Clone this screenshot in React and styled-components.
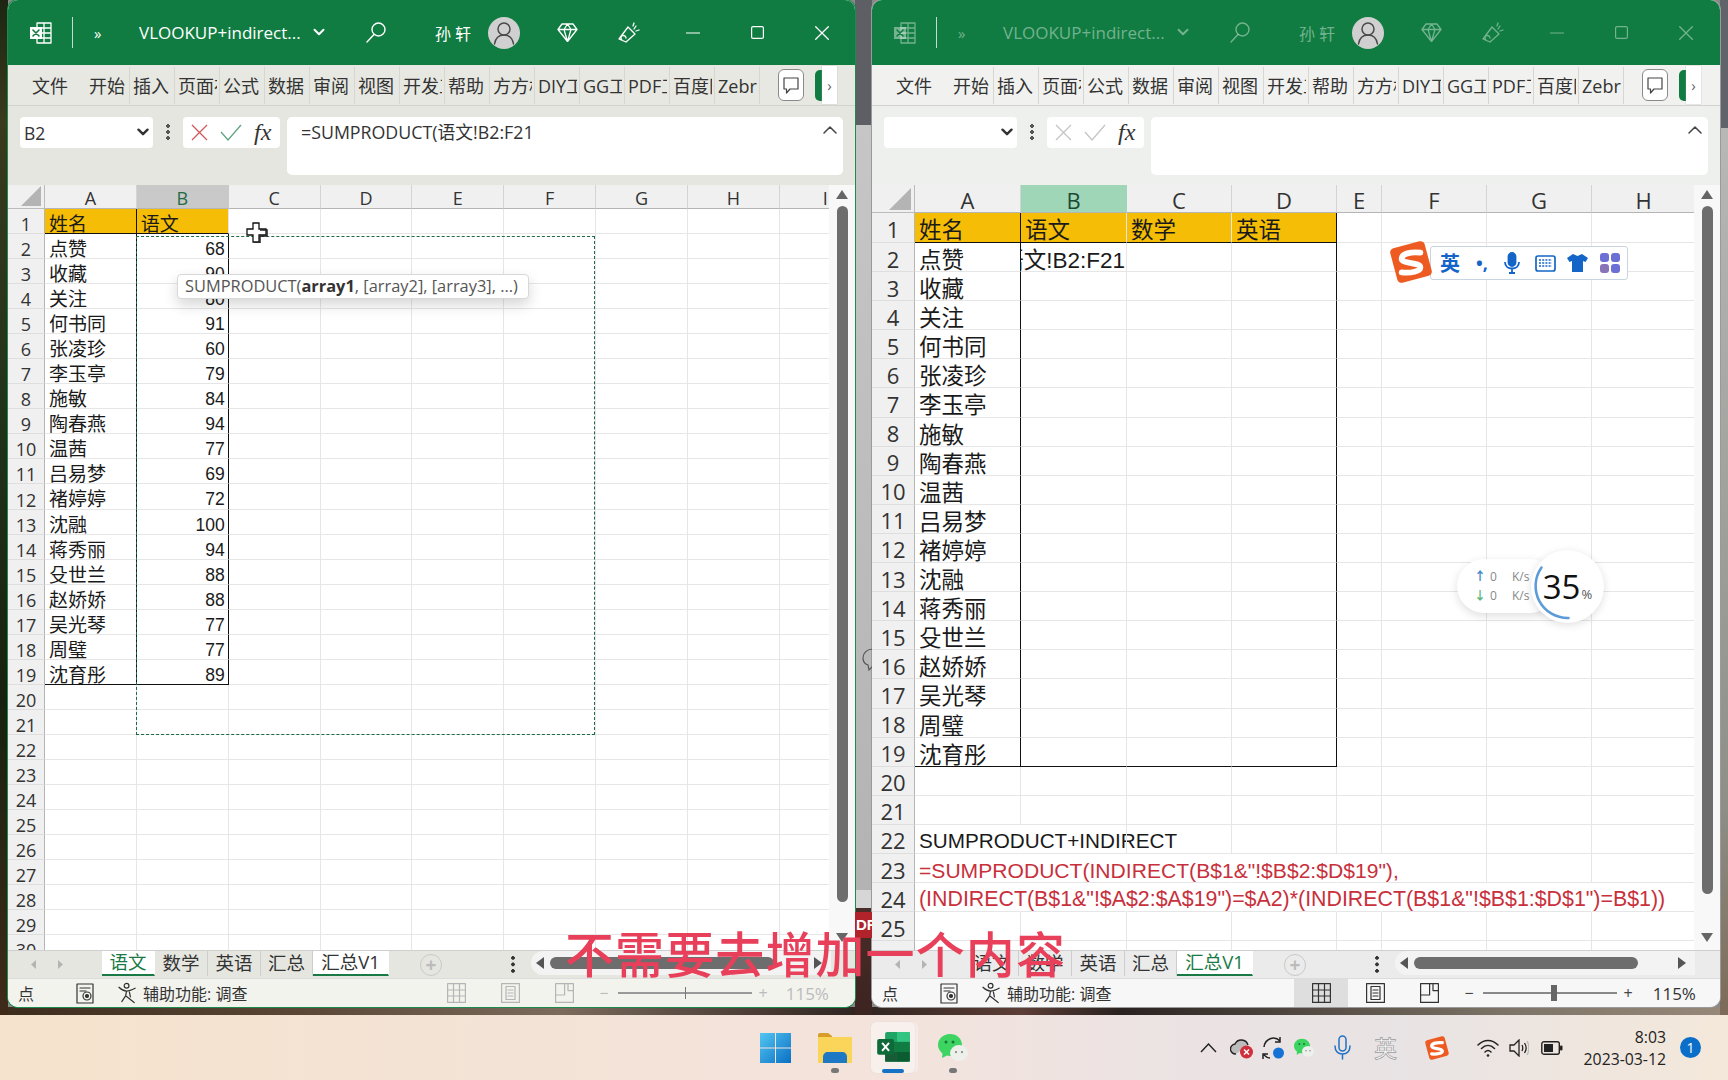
import React from "react";
import styled, { createGlobalStyle } from "styled-components";

const UI = `"Open Sans","Noto Sans CJK SC",sans-serif`;
const CELL = `"Liberation Sans","Noto Sans CJK SC",sans-serif`;

const Global = createGlobalStyle`
  html,body{margin:0;padding:0;background:#222;overflow:hidden;}
  *{box-sizing:border-box;}
`;

const Desktop = styled.div`
  position:relative;width:1728px;height:1080px;overflow:hidden;display:flex;flex-direction:column;font-family:${UI};
  background:
    linear-gradient(180deg,#5d5f64 0 125px,#c6c6c6 125px,#b3b3b3 890px,#d6d6d6 890px,#d6d6d6 908px,#4a2c28 908px,#3c2420 1015px) 855px 0/17px 1015px no-repeat,
    linear-gradient(180deg,#60636a 0 128px,#b8b8b6 128px,#8f8f88 800px,#7d6a58 1015px) 1720px 0/8px 1015px no-repeat,
    linear-gradient(180deg,#1c2612 0,#3a3a1c 120px,#22331a 400px,#18210f 700px,#3f2a18 1015px) 0 0/8px 1015px no-repeat,
    linear-gradient(90deg,#3c2c1c,#5a4736 300px,#7a6b5c 560px,#2f2420 860px,#5c3e36 1020px,#2a2220 1120px,#7c7366 1500px,#97897a 1728px) 0 1007px/1728px 8px no-repeat,
    #888;
`;
const WindowRow = styled.div`display:flex;height:1015px;padding:0 8px 8px 8px;gap:17px;`;
const Win = styled.section`
  width:${p=>p.$w}px;height:1007px;display:flex;flex-direction:column;border-radius:10px;overflow:hidden;background:#fff;
  box-shadow:0 0 0 1px ${p=>p.$active?"#1d8a50":"#9a9a9a"};
`;
const TitleBar = styled.header`
  height:65px;flex:none;display:flex;align-items:center;background:#107c41;color:${p=>p.$dim?"rgba(255,255,255,.42)":"#fff"};
`;
const TitleGlyph = styled.span`display:inline-flex;align-items:center;justify-content:center;flex:none;margin-left:${p=>p.$ml}px;width:${p=>p.$w}px;`;
const TitleDivider = styled.span`flex:none;margin-left:20px;width:1px;height:31px;background:rgba(255,255,255,.75);`;
const TitleText = styled.span`flex:none;margin-left:${p=>p.$ml}px;width:${p=>p.$w}px;font-size:${p=>p.$fs}px;white-space:nowrap;letter-spacing:${p=>p.$ls||0}px;`;
const Avatar = styled.span`flex:none;margin-left:14px;width:32px;height:32px;border-radius:50%;background:#d0d0d0;display:flex;align-items:center;justify-content:center;color:#4a4a4a;`;

const Ribbon = styled.nav`
  height:41px;flex:none;display:flex;align-items:center;background:${p=>p.$tint};border-bottom:1px solid #d2d3cd;color:#333;font-size:18px;
`;
const RibbonTab = styled.span`
  flex:none;height:37px;line-height:37px;padding-top:1px;white-space:nowrap;
  margin-left:${p=>p.$ml||0}px;width:${p=>p.$w||45}px;padding-left:${p=>p.$pl??3}px;
  border-right:1px solid ${p=>p.$noSep?"transparent":"#d6d6d2"};
`;
const RibbonClip = styled.span`display:block;width:39px;overflow:hidden;white-space:nowrap;`;
const CommentBtn = styled.span`flex:none;margin-left:18px;width:26px;height:32px;border:1px solid #8a8a8a;border-radius:6px;background:#fff;display:flex;align-items:center;justify-content:center;color:#444;`;
const ShareStub = styled.span`flex:none;margin-left:11px;width:7px;height:31px;background:#107c41;border-radius:5px 0 0 5px;`;
const RibbonMore = styled.span`flex:none;width:15px;height:38px;background:#fff;color:#666;font-size:15px;display:flex;align-items:center;justify-content:center;box-shadow:0 0 1px #aaa;`;

const FormulaBar = styled.div`height:79px;flex:none;display:flex;align-items:flex-start;padding:11px 0 0 12px;background:${p=>p.$tint};`;
const NameBox = styled.div`width:133px;height:31px;flex:none;background:#fff;border-radius:4px;display:flex;align-items:center;padding:0 4px 0 4px;font-size:17.500px;color:#333;`;
const NameChevron = styled.span`display:flex;margin-left:auto;`;
const Dots = styled.span`flex:none;margin:7px 13px 0;width:4px;height:16px;background:radial-gradient(circle at 2px 2px,#555 1.6px,transparent 2px) 0 0/4px 6px repeat-y;`;
const FxBox = styled.div`width:97px;height:31px;flex:none;background:#fff;border-radius:4px;display:flex;align-items:center;padding-left:8px;gap:12px;`;
const FxLabel = styled.span`font:italic 24px "Liberation Serif",serif;color:#333;`;
const FormulaInput = styled.div`position:relative;margin-left:7px;flex:none;width:${p=>p.$w}px;height:58px;background:#fff;border-radius:5px;padding:1px 0 0 14px;font-size:17.800px;line-height:29px;color:#333;white-space:nowrap;`;
const Collapse = styled.span`position:absolute;right:6px;top:9px;color:#444;display:flex;`;

const SheetArea = styled.div`flex:1;min-height:0;display:flex;background:#fff;`;
const GridWrap = styled.div`position:relative;flex:1;min-width:0;overflow:hidden;`;
const Grid = styled.div`
  display:grid;grid-template-columns:${p=>p.$cols};grid-template-rows:${p=>p.$head}px ${p=>p.$first}px;grid-auto-rows:${p=>p.$row}px;
  font-family:${CELL};color:#1a1a1a;
`;
const Corner = styled.div`background:#f0f0f0;border-right:1px solid #bbb;border-bottom:1px solid #bbb;position:relative;
  &::after{content:"";position:absolute;right:3px;bottom:2px;width:0;height:0;border-left:${p=>p.$s}px solid transparent;border-bottom:${p=>p.$s}px solid #b4b4b4;}
`;
const ColHead = styled.div`
  background:${p=>p.$sel||"#f0f0f0"};color:${p=>p.$selText||"#333"};border-right:1px solid ${p=>p.$sel?"transparent":"#d4d4d4"};border-bottom:1px solid #b5b5b5;
  display:flex;align-items:center;justify-content:center;padding-top:3px;font-size:${p=>p.$fs}px;font-family:${UI};
`;
const RowHead = styled.div`background:#f0f0f0;color:#333;border-right:1px solid #b5b5b5;border-bottom:1px solid #dedede;display:flex;align-items:center;justify-content:center;padding-top:${p=>p.$pt}px;font-size:${p=>p.$fs}px;font-family:${UI};`;
const Cell = styled.div`
  min-width:0;white-space:nowrap;display:flex;align-items:flex-start;line-height:1;padding:${p=>p.$pt}px ${p=>p.$clip?1:3}px 0 ${p=>p.$right?3:4}px;font-size:${p=>p.$fs}px;
  justify-content:${p=>p.$right?"flex-end":"flex-start"};
  background:${p=>p.$fill||"transparent"};color:${p=>p.$color||"#1a1a1a"};
  border-right:${p=>p.$br?"1px solid #111":p.$nor?"1px solid transparent":"1px solid #e6e6e6"};
  border-bottom:${p=>p.$bb?"1px solid #111":"1px solid #e6e6e6"};
  overflow:${p=>p.$clip?"hidden":"visible"};
`;
const CellText = styled.span`flex:none;`;

const Scroller = styled.div`flex:none;width:26px;background:#f8f8f8;position:relative;display:flex;flex-direction:column;align-items:center;`;
const ScrollUp = styled.span`margin-top:5px;width:0;height:0;border-left:6px solid transparent;border-right:6px solid transparent;border-bottom:9px solid #666;`;
const ScrollThumb = styled.span`margin-top:7px;width:11px;height:${p=>p.$h}px;border-radius:6px;background:#6d6d6d;`;
const ScrollDown = styled.span`position:absolute;bottom:8px;width:0;height:0;border-left:6px solid transparent;border-right:6px solid transparent;border-top:9px solid #666;`;

const TabBar = styled.div`height:28px;flex:none;display:flex;align-items:flex-start;background:${p=>p.$tint};border-top:1px solid #cfcfcf;font-size:18.500px;color:#333;`;
const TabArrow = styled.span`flex:none;margin:8px 0 0 ${p=>p.$ml}px;color:#b4b4b4;display:flex;`;
const TabGap = styled.span`flex:none;width:38px;`;
const SheetTab = styled.span`
  flex:none;width:${p=>p.$w}px;height:25px;display:flex;align-items:center;justify-content:center;padding-bottom:3px;
  background:${p=>p.$state?"#fff":"transparent"};color:${p=>p.$state==="active"?"#1a7a45":"#333"};
  border-bottom:${p=>p.$state?"2px solid #1a7a45":"none"};border-right:1px solid ${p=>p.$state?"transparent":"#cdcdcd"};
`;
const AddTab = styled.span`flex:none;margin:3px 0 0 ${p=>p.$ml}px;width:22px;height:22px;border-radius:50%;border:1px solid #c9c9c9;color:#bbb;display:flex;align-items:center;justify-content:center;font-size:19px;line-height:1;font-weight:700;`;
const VDots = styled(Dots)`margin:5px 0 0 69px;height:18px;background:radial-gradient(circle at 2px 2px,#333 1.6px,transparent 2px) 0 0/4px 6.5px repeat-y;`;
const HScroll = styled.div`flex:none;margin:0 0 0 16px;width:300px;height:24px;border-radius:12px 0 0 12px;background:#f3f3f3;display:flex;align-items:center;padding-left:5px;`;
const HLeft = styled.span`border-top:6px solid transparent;border-bottom:6px solid transparent;border-right:8px solid #555;`;
const HThumb = styled.span`margin-left:6px;width:224px;height:12px;border-radius:6px;background:#6d6d6d;`;
const HRight = styled.span`margin-left:40px;border-top:6px solid transparent;border-bottom:6px solid transparent;border-left:8px solid #555;`;

const StatusBar = styled.footer`height:29px;flex:none;display:flex;align-items:center;background:${p=>p.$tint};border-top:1px solid #dcdcdc;font-size:16px;color:#333;`;
const StatusText = styled.span`flex:none;margin-left:${p=>p.$ml}px;white-space:nowrap;font-size:16px;color:${p=>p.$c||"#333"};`;
const StatusGlyph = styled.span`flex:none;margin-left:${p=>p.$ml}px;width:${p=>p.$w}px;height:29px;display:flex;align-items:center;justify-content:center;color:${p=>p.$c||"#333"};background:${p=>p.$on?"#dedede":"transparent"};`;
const ZoomTrack = styled.span`flex:none;position:relative;margin-left:${p=>p.$ml}px;width:134px;height:2px;background:${p=>p.$c};`;
const ZoomKnob = styled.span`position:absolute;top:${p=>p.$thick?-7:-5}px;left:${p=>p.$thick?68:67}px;width:${p=>p.$thick?6:1}px;height:${p=>p.$thick?16:12}px;background:${p=>p.$c};`;
const ZoomPct = styled.span`flex:none;margin-left:${p=>p.$ml}px;font-size:17px;color:${p=>p.$c};`;

const Taskbar = styled.div`
  height:65px;flex:none;display:flex;align-items:center;position:relative;color:#222;
  background:linear-gradient(90deg,#f6e3cd 0,#f3e3d6 500px,#f3e3dc 900px,#ece3e3 1150px,#e8e3e4 1400px,#f4e8da 1728px);
`;
const TaskIcon = styled.span`flex:none;position:relative;margin-left:${p=>p.$ml}px;width:${p=>p.$w}px;height:${p=>p.$h||34}px;display:flex;align-items:center;justify-content:center;`;
const RunDot = styled.span`position:absolute;left:50%;transform:translateX(-50%);bottom:${p=>p.$b}px;width:${p=>p.$w}px;height:${p=>p.$bh}px;border-radius:3px;background:${p=>p.$c};`;
const ActiveTile = styled.span`flex:none;position:relative;margin-left:19px;width:44px;height:51px;border-radius:5px;background:rgba(255,255,255,.45);box-shadow:0 0 1px #ccc,3px 0 0 rgba(255,255,255,.3);display:flex;align-items:center;justify-content:center;margin-top:-1px;`;
const TrayIme = styled.span`flex:none;margin-left:${p=>p.$ml}px;font-size:23px;color:#fff;-webkit-text-stroke:.7px #999;font-family:"Noto Sans CJK SC",sans-serif;line-height:1;`;
const Clock = styled.div`flex:none;margin-left:${p=>p.$ml}px;width:90px;text-align:right;font-size:15.800px;line-height:22px;color:#222;white-space:nowrap;`;
const Badge = styled.span`flex:none;margin-left:14px;width:21px;height:21px;border-radius:50%;background:#0b6ec9;color:#fff;font-size:14px;display:flex;align-items:center;justify-content:center;`;

const Marquee = styled.div`position:absolute;left:128px;top:51px;width:459px;height:499px;border:1px dashed #1f6b45;`;
const Tooltip = styled.div`position:absolute;left:169px;top:89px;width:352px;height:25px;background:#fff;border:1px solid #d8d8d8;border-radius:4px;box-shadow:0 6px 14px rgba(0,0,0,.16);font-size:16.400px;line-height:21px;padding-left:7px;color:#555;white-space:nowrap;font-family:${UI};b{color:#333;}`;
const CursorMark = styled.svg`position:absolute;left:238px;top:37px;`;
const Subtitle = styled.div`position:absolute;left:565px;top:922px;font:500 49px/60px "Noto Sans CJK SC",sans-serif;color:#e8405a;letter-spacing:1.100px;white-space:nowrap;`;
const ImeBar = styled.div`position:absolute;left:1430px;top:246px;width:198px;height:34px;background:#fff;border:1px solid #c8d4e0;border-radius:3px;display:flex;align-items:center;color:#1565c8;`;
const ImeWord = styled.span`flex:none;margin-left:9px;font:700 20px "Noto Sans CJK SC",sans-serif;line-height:1;`;
const ImeGlyph = styled.span`flex:none;margin-left:${p=>p.$ml}px;display:flex;`;
const ImeComma = styled(ImeGlyph)`font-weight:700;font-size:18px;line-height:20px;`;
const SLogoBox = styled.span`position:absolute;left:1388px;top:239px;display:flex;`;
const NetPill = styled.div`position:absolute;left:1457px;top:559px;width:100px;height:54px;border-radius:27px;background:#fff;box-shadow:0 3px 10px rgba(0,0,0,.13);padding:8px 0 0 17px;font-size:12px;line-height:19px;color:#888;`;
const NetRow = styled.div`display:flex;align-items:center;white-space:nowrap;gap:4px;b{font-weight:700;color:${p=>p.$c};}i{font-style:normal;margin-left:11px;}`;
const NetDial = styled.div`position:absolute;left:1531px;top:550px;width:73px;height:73px;border-radius:50%;background:#fff;box-shadow:0 2px 9px rgba(0,0,0,.13);display:flex;align-items:baseline;justify-content:center;padding-top:15px;color:#111;font-size:33px;line-height:44px;svg{position:absolute;left:0;top:0;}small{font-size:13px;color:#555;margin-left:1px;}`;
const GapLabel = styled.div`position:absolute;left:855px;top:912px;width:17px;height:26px;background:#b1232b;color:#fff;font:700 15px/26px "Liberation Sans",sans-serif;overflow:hidden;white-space:nowrap;padding-left:1px;`;
const GapBubble = styled.svg`position:absolute;left:862px;top:648px;`;

const s = {fill:"none",stroke:"currentColor",strokeLinecap:"round",strokeLinejoin:"round"};
const XlsMark = () => <svg width="22" height="22" viewBox="0 0 22 22" {...s} strokeWidth="1.3"><path d="M7 1h14v20H7zM7 6h14M7 11h14M7 16h14M14 1v20"/><rect x="0" y="5" width="12" height="12" fill="currentColor" stroke="none"/><path d="M3 8l6 6M9 8l-6 6" stroke="#107c41" strokeWidth="1.6"/></svg>;
const ChevronD = ({w=12,sw=2}) => <svg width={w} height={w*0.7} viewBox="0 0 12 8" {...s} strokeWidth={sw}><path d="M1.5 1.5L6 6l4.5-4.5"/></svg>;
const Search = () => <svg width="20" height="21" viewBox="0 0 20 21" {...s} strokeWidth="1.4"><circle cx="12.5" cy="7.5" r="6.5"/><path d="M8 12.5L1 20"/></svg>;
const Person = () => <svg width="22" height="24" viewBox="0 0 22 24" {...s} strokeWidth="1.5"><circle cx="11" cy="8" r="6"/><path d="M1.5 23c1-6 5-9 9.5-9s8.500 3 9.500 9"/></svg>;
const Diamond = () => <svg width="21" height="19" viewBox="0 0 21 19" {...s} strokeWidth="1.3"><path d="M5 1h11l4 5.500-9.500 12L1 6.500zM1 6.500h19M7 6.500l3.500 12 3.500-12M7 6.500L10.500 1l3.500 5.500"/></svg>;
const Brush = () => <svg width="22" height="22" viewBox="0 0 22 22" {...s} strokeWidth="1.3"><path d="M10 5l7 7-9 8-7-3zM4 18a2.500 2.500 0 1 1 4-2M16 7l2-3M18 9l3-1M15 4l1-3"/></svg>;
const MinG = () => <svg width="14" height="2" viewBox="0 0 14 2" {...s} strokeWidth="1.2"><path d="M0 1h14"/></svg>;
const MaxG = () => <svg width="13" height="13" viewBox="0 0 13 13" {...s} strokeWidth="1.2"><rect x=".6" y=".6" width="11.800" height="11.800" rx="1.500"/></svg>;
const CloseG = () => <svg width="14" height="14" viewBox="0 0 14 14" {...s} strokeWidth="1.3"><path d="M.7.7l12.600 12.600M13.300.7L.7 13.300"/></svg>;
const Bubble = () => <svg width="16" height="17" viewBox="0 0 16 17" {...s} strokeWidth="1.200"><path d="M1 1h14v11H7l-3.500 4v-4H1z"/></svg>;
const XMark = ({c}) => <svg width="17" height="17" viewBox="0 0 17 17" fill="none" stroke={c} strokeWidth="1.300"><path d="M1 1l15 15M16 1L1 16"/></svg>;
const CheckMark = ({c}) => <svg width="22" height="17" viewBox="0 0 22 17" fill="none" stroke={c} strokeWidth="1.300"><path d="M1 8l7 8L21 1"/></svg>;
const Caret = () => <svg width="14" height="8" viewBox="0 0 14 8" {...s} strokeWidth="1.500"><path d="M1 7l6-6 6 6"/></svg>;
const TriL = () => <svg width="7" height="11" viewBox="0 0 7 11" fill="currentColor"><path d="M6 1v9L1 5.500z"/></svg>;
const TriR = () => <svg width="7" height="11" viewBox="0 0 7 11" fill="currentColor"><path d="M1 1v9l5-4.500z"/></svg>;
const Macro = () => <svg width="20" height="21" viewBox="0 0 20 21" {...s} strokeWidth="1.200"><path d="M2 1h16M2 1v19h16V1M5 5h10M5 8h6"/><circle cx="12" cy="13" r="4"/><circle cx="12" cy="13" r="1.500" fill="currentColor"/></svg>;
const Access = () => <svg width="21" height="22" viewBox="0 0 21 22" {...s} strokeWidth="1.300"><circle cx="9" cy="3.500" r="2.500"/><path d="M1 5c3 3 5 4 8 4s5-1 9-3M9 9l-1 5-4 6M8 14l9 7M12 10l1 5"/></svg>;
const ViewGrid = () => <svg width="19" height="20" viewBox="0 0 19 20" {...s} strokeWidth="1.200"><rect x=".6" y=".6" width="17.800" height="18.800"/><path d="M6.500.6v18.800M12.500.6v18.800M.6 7h17.800M.6 13h17.800"/></svg>;
const ViewPage = () => <svg width="19" height="20" viewBox="0 0 19 20" {...s} strokeWidth="1.200"><rect x=".6" y=".6" width="17.800" height="18.800"/><rect x="5" y="3.500" width="9" height="13"/><path d="M7 7h5M7 10h5M7 13h5"/></svg>;
const ViewBreak = () => <svg width="19" height="20" viewBox="0 0 19 20" {...s} strokeWidth="1.200"><rect x=".6" y=".6" width="17.800" height="18.800"/><path d="M.6 12h9V.6M13 .6v7h5.500"/></svg>;
const SLogo = ({size=44}) => <svg width={size} height={size} viewBox="0 0 44 44"><rect x="5" y="5" width="34" height="34" rx="4" fill="#ee5b22" transform="rotate(-15 22 22)"/><path d="M31 13C22 12 13 14 13 19c0 5 18 3 18 8 0 4-9 6-18 5" fill="none" stroke="#fff" strokeWidth="5.500" strokeLinecap="round"/></svg>;
const WinLogo = () => <svg width="33" height="32" viewBox="0 0 33 32"><defs><linearGradient id="wg" x1="0" y1="0" x2="1" y2="1"><stop offset="0" stopColor="#53c6f2"/><stop offset="1" stopColor="#0a6fc4"/></linearGradient></defs><path fill="url(#wg)" d="M1 1h15v14.500H1zM17 1h15v14.500H17zM1 16.500h15V31H1zM17 16.500h15V31H17z"/></svg>;
const Folder = () => <svg width="34" height="31" viewBox="0 0 34 31"><path d="M0 3a2 2 0 0 1 2-2h8l4 3v5H0z" fill="#d79c2a"/><rect y="5" width="34" height="26" fill="#fbd45a"/><path d="M5 31v-6c0-3 2-5 5-5h14c3 0 5 2 5 5v6z" fill="#1f78c4"/></svg>;
const XlLogo = ({w=33}) => <svg width={w} height={w*0.9} viewBox="0 0 33 30"><rect x="8" y="0" width="25" height="30" rx="2" fill="#21a366"/><rect x="20" y="0" width="13" height="10" fill="#33c481"/><rect x="8" y="10" width="25" height="10" fill="#107c41"/><rect x="20" y="20" width="13" height="10" fill="#0b5c30"/><rect x="8" y="20" width="12" height="10" fill="#185c37"/><rect y="7" width="17" height="16" rx="2" fill="#0e6a39"/><path d="M5 11l7 8M12 11l-7 8" stroke="#fff" strokeWidth="2"/></svg>;
const WeChat = ({w=30}) => <svg width={w} height={w*0.97} viewBox="0 0 30 29"><path d="M12 1C5 1 0 6 0 12c0 3.500 2 6.500 4.500 8.500L4 25l5-2.500c1 .3 2 .4 3 .4 7 0 12-5 12-11S19 1 12 1z" fill="#3dd462"/><circle cx="8" cy="9" r="1.500" fill="#167a35"/><circle cx="15" cy="9" r="1.500" fill="#167a35"/><ellipse cx="21" cy="20" rx="9" ry="8" fill="#eef0ec"/><circle cx="18" cy="19" r="1.100" fill="#888"/><circle cx="24" cy="19" r="1.100" fill="#888"/></svg>;
const Cloud = () => <svg width="23" height="23" viewBox="0 0 23 23"><path d="M6 18a5 5 0 0 1-1-10 7 7 0 0 1 13 1" fill="#bcbcbc" stroke="#222" strokeWidth="1.400"/><circle cx="16.500" cy="16" r="6.500" fill="#d0303c"/><path d="M14 13.500l5 5M19 13.500l-5 5" stroke="#fff" strokeWidth="1.500"/></svg>;
const Sync = () => <svg width="23" height="24" viewBox="0 0 23 24" fill="none" stroke="#222" strokeWidth="1.500"><path d="M2 11C3 3 12-1 18 5M18 1v5h-5M1 23v-5h5M2 19c2 2 4 3 6 3"/><circle cx="16.500" cy="17" r="5.500" fill="#1672d4" stroke="none"/></svg>;
const MicT = () => <svg width="17" height="25" viewBox="0 0 17 25" fill="none" stroke="#2272c4" strokeWidth="1.500" strokeLinecap="round"><rect x="5" y="1" width="7" height="15" rx="3.500"/><path d="M1 11c0 5 3 8 7.500 8s7.500-3 7.500-8M8.500 19v5"/></svg>;
const Wifi = () => <svg width="22" height="18" viewBox="0 0 22 18" fill="none" stroke="#222" strokeWidth="1.500" strokeLinecap="round"><path d="M1 6c6-6 14-6 20 0M4.500 9.500c4-4 9-4 13 0M8 13c2-2 4-2 6 0"/><circle cx="11" cy="16.500" r="1.300" fill="#222" stroke="none"/></svg>;
const Vol = () => <svg width="20" height="18" viewBox="0 0 20 18" fill="none" stroke="#222" strokeWidth="1.300"><path d="M1 6h4l5-5v16l-5-5H1z"/><path d="M13 6c1 2 1 4 0 6M15.500 4c2 3 2 7 0 10"/><path d="M18 2c2.500 4 2.500 10 0 14" stroke="#bbb"/></svg>;
const Battery = () => <svg width="22" height="14" viewBox="0 0 22 14"><rect x=".8" y=".8" width="17.500" height="12.400" rx="2" fill="none" stroke="#222" strokeWidth="1.400"/><rect x="3" y="3" width="9" height="8" fill="#222"/><rect x="19" y="4.500" width="2.500" height="5" rx="1" fill="#222"/></svg>;
const Mic = () => <svg width="16" height="22" viewBox="0 0 16 22" fill="none" stroke="currentColor" strokeWidth="1.800"><rect x="4.500" y="1" width="7" height="13" rx="3.500" fill="currentColor"/><path d="M1 10c0 4 3 6.500 7 6.500s7-2.500 7-6.500M8 17v4M5 21h6"/></svg>;
const Keyboard = () => <svg width="21" height="17" viewBox="0 0 21 17" fill="none" stroke="currentColor" strokeWidth="1.700"><rect x="1" y="1" width="19" height="15" rx="2"/><path d="M4 5h13M4 8h13M4 11h13" strokeDasharray="2 1.200"/></svg>;
const Shirt = () => <svg width="21" height="18" viewBox="0 0 21 18" fill="currentColor"><path d="M6 0l4.500 2L15 0l6 4-2.500 4L16 7v11H5V7L2.500 8 0 4z"/></svg>;
const Apps = () => <svg width="20" height="20" viewBox="0 0 20 20"><rect width="9" height="9" rx="3" fill="#6c6fd4"/><rect x="11" width="9" height="9" rx="3" fill="#6c6fd4"/><rect y="11" width="9" height="9" rx="3" fill="#8a74b8"/><rect x="11" y="11" width="9" height="9" rx="3" fill="#6c6fd4"/></svg>;

const Names = ["姓名","点赞","收藏","关注","何书同","张凌珍","李玉亭","施敏","陶春燕","温茜","吕易梦","褚婷婷","沈融","蒋秀丽","殳世兰","赵娇娇","吴光琴","周璧","沈育彤"];
const Scores = [68,90,80,91,60,79,84,94,77,69,72,100,94,88,88,77,77,89];
const RibbonNames = ["插入","页面布局","公式","数据","审阅","视图","开发工具","帮助","方方格子","DIY工具箱","GG工具","PDF工具集","百度网盘","Zebra"];

function SheetTabs({ tint, tabs }) {
  return (
    <TabBar $tint={tint}>
      <TabArrow $ml={22}><TriL/></TabArrow>
      <TabArrow $ml={20}><TriR/></TabArrow>
      <TabGap/>
      {tabs.map(t => <SheetTab key={t.n} $w={t.w} $state={t.s}>{t.n}</SheetTab>)}
      <AddTab $ml={31}>+</AddTab>
      <VDots/>
      <HScroll><HLeft/><HThumb/><HRight/></HScroll>
    </TabBar>
  );
}

function Chrome({ dim, tint, panel, name, formula, iconX, iconCheck, formulaW }) {
  return (
    <>
      <TitleBar $dim={dim}>
        <TitleGlyph $ml={22} $w={22}><XlsMark/></TitleGlyph>
        <TitleDivider/>
        <TitleText $ml={21} $w={10} $fs={15}>»</TitleText>
        <TitleText $ml={35} $w={161} $fs={17}>VLOOKUP+indirect...</TitleText>
        <TitleGlyph $ml={13} $w={12}><ChevronD/></TitleGlyph>
        <TitleGlyph $ml={41} $w={20}><Search/></TitleGlyph>
        <TitleText $ml={49} $w={39} $fs={16} $ls={4}>孙轩</TitleText>
        <Avatar><Person/></Avatar>
        <TitleGlyph $ml={37} $w={21}><Diamond/></TitleGlyph>
        <TitleGlyph $ml={40} $w={22}><Brush/></TitleGlyph>
        <TitleGlyph $ml={46} $w={14}><MinG/></TitleGlyph>
        <TitleGlyph $ml={51} $w={13}><MaxG/></TitleGlyph>
        <TitleGlyph $ml={51} $w={14}><CloseG/></TitleGlyph>
      </TitleBar>
      <Ribbon $tint={tint}>
        <RibbonTab $ml={24} $w={36} $pl={0} $noSep>文件</RibbonTab>
        <RibbonTab $ml={21} $w={41} $pl={0}>开始</RibbonTab>
        {RibbonNames.map(n => <RibbonTab key={n}><RibbonClip>{n}</RibbonClip></RibbonTab>)}
        <CommentBtn><Bubble/></CommentBtn>
        <ShareStub/>
        <RibbonMore>›</RibbonMore>
      </Ribbon>
      <FormulaBar $tint={panel}>
        <NameBox>{name}<NameChevron><ChevronD sw={2.400}/></NameChevron></NameBox>
        <Dots/>
        <FxBox>
          <XMark c={iconX}/>
          <CheckMark c={iconCheck}/>
          <FxLabel>fx</FxLabel>
        </FxBox>
        <FormulaInput $w={formulaW}>
          {formula}
          <Collapse><Caret/></Collapse>
        </FormulaInput>
      </FormulaBar>
    </>
  );
}

function LeftSheet() {
  const cols = ["A","B","C","D","E","F","G","H","I"];
  const rows = [];
  for (let r = 1; r <= 30; r++) {
    rows.push(<RowHead key={"h"+r} $fs={18} $pt={6}>{r}</RowHead>);
    cols.forEach((c, i) => {
      const inTable = r <= 19;
      const digits = c==="B" && r>1;
      let body = null;
      if (c === "A" && r <= 19) body = <CellText>{Names[r-1]}</CellText>;
      if (c === "B" && r === 1) body = <CellText>语文</CellText>;
      if (digits && r <= 19) body = <CellText>{Scores[r-2]}</CellText>;
      rows.push(
        <Cell key={c+r} $fs={digits?17.500:19} $pt={digits?7:6} $right={digits}
          $fill={r===1&&i<2?"#f5bd06":undefined}
          $br={inTable&&(i===0||(i===1&&r>1))}
          $bb={(r===1||r===19)&&i<2}>{body}</Cell>
      );
    });
  }
  return (
    <Grid $cols="37px repeat(9,91.850px)" $head={24} $first={25} $row={25.050}>
      <Corner $s={20}/>
      {cols.map(c => <ColHead key={c} $fs={18} $sel={c==="B"?"#c9c9c9":undefined} $selText={c==="B"?"#1f6b45":undefined}>{c}</ColHead>)}
      {rows}
    </Grid>
  );
}

function RightSheet() {
  const cols = ["A","B","C","D","E","F","G","H"];
  const rows = [];
  const hdr = {B:"语文",C:"数学",D:"英语"};
  const reach = {22:1,23:5,24:7};
  for (let r = 1; r <= 26; r++) {
    rows.push(<RowHead key={"h"+r} $fs={22} $pt={3}>{r}</RowHead>);
    cols.forEach((c, i) => {
      const inTable = r <= 19;
      let body = null, color, fs = 22.500, clip = false, right = false, pt = 7;
      if (c === "A" && r <= 19) body = <CellText>{Names[r-1]}</CellText>;
      if (r === 1 && hdr[c]) body = <CellText>{hdr[c]}</CellText>;
      if (c === "B" && r === 2) { body = <CellText>=SUMPRODUCT(语文!B2:F21</CellText>; clip = true; right = true; fs = 22.500; }
      if (c === "A" && r === 22) { body = <CellText>SUMPRODUCT+INDIRECT</CellText>; fs = 20.700; pt = 6; }
      if (c === "A" && r === 23) { body = <CellText>{'=SUMPRODUCT(INDIRECT(B$1&"!$B$2:$D$19"),'}</CellText>; fs = 21.100; pt = 6; color = "#c8303c"; }
      if (c === "A" && r === 24) { body = <CellText>{'(INDIRECT(B$1&"!$A$2:$A$19")=$A2)*(INDIRECT(B$1&"!$B$1:$D$1")=B$1))'}</CellText>; fs = 21.370; pt = 6; color = "#c8303c"; }
      rows.push(
        <Cell key={c+r} $fs={fs} $pt={pt} $color={color} $clip={clip} $right={right}
          $fill={r===1&&i<4?"#f5bd06":undefined}
          $nor={reach[r]!==undefined&&i<reach[r]}
          $br={inTable&&(i===0||i===3)}
          $bb={(r===1||r===19)&&i<4}>{body}</Cell>
      );
    });
  }
  return (
    <Grid $cols="43px 106px 106px 105px 105px 45px 105px 105px 104px" $head={28} $first={30} $row={29.100}>
      <Corner $s={22}/>
      {cols.map(c => <ColHead key={c} $fs={22} $sel={c==="B"?"#a0d6b8":undefined} $selText={c==="B"?"#1d4a33":undefined}>{c}</ColHead>)}
      {rows}
    </Grid>
  );
}

export default function App() {
  return (
    <Desktop>
      <Global/>
      <GapBubble width="11" height="24" viewBox="0 0 11 24" fill="none" stroke="#555" strokeWidth="1.200"><path d="M11 1C5 1 1 5 1 10c0 3 2 6 5 7l1 5 4-4"/></GapBubble>
      <GapLabel>DF</GapLabel>
      <WindowRow>
        <Win $w={847} $active>
          <Chrome tint="#e7e8e2" panel="#e5e6df" name="B2" iconX="#d0585c" iconCheck="#5fa57f" formulaW={556} formula="=SUMPRODUCT(语文!B2:F21"/>
          <SheetArea>
            <GridWrap>
              <LeftSheet/>
              <Marquee/>
              <Tooltip>SUMPRODUCT(<b>array1</b>, [array2], [array3], ...)</Tooltip>
              <CursorMark width="22" height="21" viewBox="0 0 22 21"><path d="M7 1h6v6h7v6h-7v7H7v-7H1V7h6z" fill="#fff" stroke="#111" strokeWidth="1.300"/><path d="M14 8h7v6h-7v7H8" fill="none" stroke="#222" strokeWidth="1.500"/></CursorMark>
            </GridWrap>
            <Scroller><ScrollUp/><ScrollThumb $h={696}/><ScrollDown/></Scroller>
          </SheetArea>
          <SheetTabs tint="#e6e6e0" tabs={[{n:"语文",w:53,s:"active"},{n:"数学",w:53},{n:"英语",w:53},{n:"汇总",w:52},{n:"汇总V1",w:76,s:"ref"}]}/>
          <StatusBar $tint="#f3f3ee">
            <StatusText $ml={10}>点</StatusText>
            <StatusGlyph $ml={41} $w={20}><Macro/></StatusGlyph>
            <StatusGlyph $ml={23} $w={20}><Access/></StatusGlyph>
            <StatusText $ml={5}>辅助功能: 调查</StatusText>
            <StatusGlyph $ml={200} $w={19} $c="#b5b5b5"><ViewGrid/></StatusGlyph>
            <StatusGlyph $ml={35} $w={19} $c="#b5b5b5"><ViewPage/></StatusGlyph>
            <StatusGlyph $ml={35} $w={19} $c="#b5b5b5"><ViewBreak/></StatusGlyph>
            <StatusText $ml={25} $c="#bbb">−</StatusText>
            <ZoomTrack $ml={9} $c="#999"><ZoomKnob $c="#777"/></ZoomTrack>
            <StatusText $ml={7} $c="#bbb">+</StatusText>
            <ZoomPct $ml={18} $c="#bbb">115%</ZoomPct>
          </StatusBar>
        </Win>
        <Win $w={848}>
          <Chrome dim tint="#f1f2f0" panel="#eef0ee" name="" iconX="#c4c4c4" iconCheck="#c4c4c4" formulaW={557} formula=""/>
          <SheetArea>
            <GridWrap>
              <RightSheet/>
            </GridWrap>
            <Scroller><ScrollUp/><ScrollThumb $h={688}/><ScrollDown/></Scroller>
          </SheetArea>
          <SheetTabs tint="#ebebeb" tabs={[{n:"语文",w:53},{n:"数学",w:53},{n:"英语",w:53},{n:"汇总",w:52},{n:"汇总V1",w:76,s:"active"}]}/>
          <StatusBar $tint="#f7f7f7">
            <StatusText $ml={10}>点</StatusText>
            <StatusGlyph $ml={41} $w={20}><Macro/></StatusGlyph>
            <StatusGlyph $ml={23} $w={20}><Access/></StatusGlyph>
            <StatusText $ml={5}>辅助功能: 调查</StatusText>
            <StatusGlyph $ml={183} $w={54} $on><ViewGrid/></StatusGlyph>
            <StatusGlyph $ml={18} $w={19}><ViewPage/></StatusGlyph>
            <StatusGlyph $ml={35} $w={19}><ViewBreak/></StatusGlyph>
            <StatusText $ml={25} $c="#444">−</StatusText>
            <ZoomTrack $ml={9} $c="#888"><ZoomKnob $thick $c="#666"/></ZoomTrack>
            <StatusText $ml={7} $c="#444">+</StatusText>
            <ZoomPct $ml={20} $c="#333">115%</ZoomPct>
          </StatusBar>
        </Win>
      </WindowRow>
      <Taskbar>
        <TaskIcon $ml={759} $w={33}><WinLogo/></TaskIcon>
        <TaskIcon $ml={26} $w={34}><Folder/><RunDot $b={-8} $w={8} $bh={5} $c="#777"/></TaskIcon>
        <ActiveTile><XlLogo/><RunDot $b={0} $w={22} $bh={4} $c="#1672c4"/></ActiveTile>
        <TaskIcon $ml={23} $w={30}><WeChat/><RunDot $b={-8} $w={8} $bh={5} $c="#777"/></TaskIcon>
        <TaskIcon $ml={232} $w={17}><svg width="17" height="10" viewBox="0 0 17 10" fill="none" stroke="#222" strokeWidth="1.400"><path d="M1 9l7.500-8L16 9"/></svg></TaskIcon>
        <TaskIcon $ml={13} $w={23}><Cloud/></TaskIcon>
        <TaskIcon $ml={9} $w={23}><Sync/></TaskIcon>
        <TaskIcon $ml={9} $w={20}><WeChat w={20}/></TaskIcon>
        <TaskIcon $ml={20} $w={17}><MicT/></TaskIcon>
        <TrayIme $ml={23}>英</TrayIme>
        <TaskIcon $ml={27} $w={26}><SLogo size={28}/></TaskIcon>
        <TaskIcon $ml={27} $w={22}><Wifi/></TaskIcon>
        <TaskIcon $ml={10} $w={20}><Vol/></TaskIcon>
        <TaskIcon $ml={12} $w={22}><Battery/></TaskIcon>
        <Clock $ml={13}><div>8:03</div><div>2023-03-12</div></Clock>
        <Badge>1</Badge>
      </Taskbar>
      <ImeBar>
        <ImeWord>英</ImeWord>
        <ImeComma $ml={16}>•,</ImeComma>
        <ImeGlyph $ml={16}><Mic/></ImeGlyph>
        <ImeGlyph $ml={15}><Keyboard/></ImeGlyph>
        <ImeGlyph $ml={11}><Shirt/></ImeGlyph>
        <ImeGlyph $ml={12}><Apps/></ImeGlyph>
      </ImeBar>
      <SLogoBox><SLogo size={46}/></SLogoBox>
      <NetPill>
        <NetRow $c="#3f86c8"><b>↑</b>0<i>K/s</i></NetRow>
        <NetRow $c="#58b878"><b>↓</b>0<i>K/s</i></NetRow>
      </NetPill>
      <NetDial>
        <svg width="73" height="73" viewBox="0 0 73 73" fill="none"><path d="M10.500 17.500A32 32 0 0 0 37.500 68" stroke="#5b9bd8" strokeWidth="2.500" strokeLinecap="round"/></svg>
        35<small>%</small>
      </NetDial>
      <Subtitle>不需要去增加一个内容</Subtitle>
    </Desktop>
  );
}
